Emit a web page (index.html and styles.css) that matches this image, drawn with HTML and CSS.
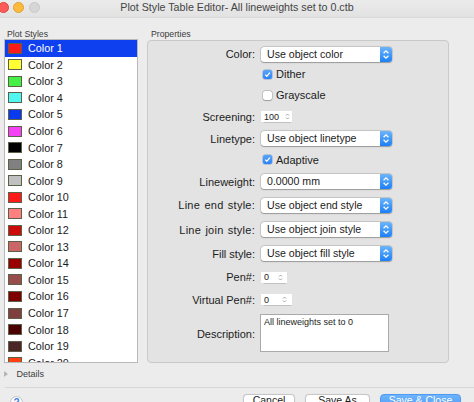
FILE: index.html
```html
<!DOCTYPE html>
<html>
<head>
<meta charset="utf-8">
<title>Plot Style Table Editor</title>
<link rel="stylesheet" href="styles.css">
</head>
<body>
<div class="titlebar">
  <div class="lights"><span class="light red"></span><span class="light yellow"></span><span class="light grey"></span></div>
  <div class="title">Plot Style Table Editor- All lineweights set to 0.ctb</div>
  <div></div>
</div>
<div class="main">
  <div class="left">
    <div class="caption cap-left">Plot Styles</div>
    <div class="list">
      <div class="row selected"><span class="sw" style="background:#ff1a1a"></span><span>Color 1</span></div>
      <div class="row"><span class="sw" style="background:#ffff33"></span><span>Color 2</span></div>
      <div class="row"><span class="sw" style="background:#44f044"></span><span>Color 3</span></div>
      <div class="row"><span class="sw" style="background:#4ff7f0"></span><span>Color 4</span></div>
      <div class="row"><span class="sw" style="background:#0a3af0"></span><span>Color 5</span></div>
      <div class="row"><span class="sw" style="background:#f540f5"></span><span>Color 6</span></div>
      <div class="row"><span class="sw" style="background:#000000"></span><span>Color 7</span></div>
      <div class="row"><span class="sw" style="background:#808080"></span><span>Color 8</span></div>
      <div class="row"><span class="sw" style="background:#c0c0c0"></span><span>Color 9</span></div>
      <div class="row"><span class="sw" style="background:#ff1a1a"></span><span>Color 10</span></div>
      <div class="row"><span class="sw" style="background:#ff8080"></span><span>Color 11</span></div>
      <div class="row"><span class="sw" style="background:#cc0a0a"></span><span>Color 12</span></div>
      <div class="row"><span class="sw" style="background:#cc6666"></span><span>Color 13</span></div>
      <div class="row"><span class="sw" style="background:#990000"></span><span>Color 14</span></div>
      <div class="row"><span class="sw" style="background:#994c4c"></span><span>Color 15</span></div>
      <div class="row"><span class="sw" style="background:#7f0000"></span><span>Color 16</span></div>
      <div class="row"><span class="sw" style="background:#7f3f3f"></span><span>Color 17</span></div>
      <div class="row"><span class="sw" style="background:#4c0000"></span><span>Color 18</span></div>
      <div class="row"><span class="sw" style="background:#4c2626"></span><span>Color 19</span></div>
      <div class="row"><span class="sw" style="background:#ff4010"></span><span>Color 20</span></div>
    </div>
  </div>
  <div class="right">
    <div class="caption cap-right">Properties</div>
    <div class="group">
      <div class="lbl">Color:</div>
      <div class="ctl"><div class="select"><span class="sel-text">Use object color</span><span class="sel-btn"><svg width="12" height="15" viewBox="0 0 12 15"><path d="M3.6 6.2 L6 3.8 L8.4 6.2 M3.6 8.8 L6 11.2 L8.4 8.8" fill="none" stroke="#fff" stroke-width="1.3"/></svg></span></div></div>

      <div class="lbl"></div>
      <div class="ctl"><span class="check on"><svg width="9" height="9" viewBox="0 0 9 9"><path d="M2.2 4.6 L3.8 6.3 L6.9 2.6" fill="none" stroke="#fff" stroke-width="1.3"/></svg></span><span class="ck-text">Dither</span></div>

      <div class="lbl"></div>
      <div class="ctl"><span class="check"></span><span class="ck-text">Grayscale</span></div>

      <div class="lbl">Screening:</div>
      <div class="ctl"><div class="spin spin-scr"><span>100</span><svg class="step" width="5" height="9" viewBox="0 0 5 9"><path d="M1 3.5 L2.5 2 L4 3.5 M1 5.5 L2.5 7 L4 5.5" fill="none" stroke="#9a9a9a" stroke-width="0.9"/></svg></div></div>

      <div class="lbl">Linetype:</div>
      <div class="ctl"><div class="select"><span class="sel-text">Use object linetype</span><span class="sel-btn"><svg width="12" height="15" viewBox="0 0 12 15"><path d="M3.6 6.2 L6 3.8 L8.4 6.2 M3.6 8.8 L6 11.2 L8.4 8.8" fill="none" stroke="#fff" stroke-width="1.3"/></svg></span></div></div>

      <div class="lbl"></div>
      <div class="ctl"><span class="check on"><svg width="9" height="9" viewBox="0 0 9 9"><path d="M2.2 4.6 L3.8 6.3 L6.9 2.6" fill="none" stroke="#fff" stroke-width="1.3"/></svg></span><span class="ck-text">Adaptive</span></div>

      <div class="lbl">Lineweight:</div>
      <div class="ctl"><div class="select"><span class="sel-text">0.0000 mm</span><span class="sel-btn"><svg width="12" height="15" viewBox="0 0 12 15"><path d="M3.6 6.2 L6 3.8 L8.4 6.2 M3.6 8.8 L6 11.2 L8.4 8.8" fill="none" stroke="#fff" stroke-width="1.3"/></svg></span></div></div>

      <div class="lbl lbl-wide">Line end style:</div>
      <div class="ctl"><div class="select"><span class="sel-text">Use object end style</span><span class="sel-btn"><svg width="12" height="15" viewBox="0 0 12 15"><path d="M3.6 6.2 L6 3.8 L8.4 6.2 M3.6 8.8 L6 11.2 L8.4 8.8" fill="none" stroke="#fff" stroke-width="1.3"/></svg></span></div></div>

      <div class="lbl lbl-wide">Line join style:</div>
      <div class="ctl"><div class="select"><span class="sel-text">Use object join style</span><span class="sel-btn"><svg width="12" height="15" viewBox="0 0 12 15"><path d="M3.6 6.2 L6 3.8 L8.4 6.2 M3.6 8.8 L6 11.2 L8.4 8.8" fill="none" stroke="#fff" stroke-width="1.3"/></svg></span></div></div>

      <div class="lbl">Fill style:</div>
      <div class="ctl"><div class="select"><span class="sel-text">Use object fill style</span><span class="sel-btn"><svg width="12" height="15" viewBox="0 0 12 15"><path d="M3.6 6.2 L6 3.8 L8.4 6.2 M3.6 8.8 L6 11.2 L8.4 8.8" fill="none" stroke="#fff" stroke-width="1.3"/></svg></span></div></div>

      <div class="lbl">Pen#:</div>
      <div class="ctl"><div class="spin spin-pen"><span>0</span><svg class="step" width="5" height="9" viewBox="0 0 5 9"><path d="M1 3.5 L2.5 2 L4 3.5 M1 5.5 L2.5 7 L4 5.5" fill="none" stroke="#9a9a9a" stroke-width="0.9"/></svg></div></div>

      <div class="lbl">Virtual Pen#:</div>
      <div class="ctl"><div class="spin spin-vpen"><span>0</span><svg class="step" width="5" height="9" viewBox="0 0 5 9"><path d="M1 3.5 L2.5 2 L4 3.5 M1 5.5 L2.5 7 L4 5.5" fill="none" stroke="#9a9a9a" stroke-width="0.9"/></svg></div></div>

      <div class="lbl lbl-desc">Description:</div>
      <div class="ctl ctl-desc"><div class="desc">All lineweights set to 0</div></div>
    </div>
  </div>
</div>
<div class="details"><svg class="tri" width="4" height="6" viewBox="0 0 4 6"><path d="M0 0 L4 3 L0 6 Z" fill="#b5b5b5"/></svg><span>Details</span></div>
<div class="sep"></div>
<div class="buttons">
  <span class="help">?</span>
  <span class="spacer"></span>
  <span class="btn b-cancel">Cancel</span>
  <span class="btn b-saveas">Save As</span>
  <span class="btn primary b-close">Save &amp; Close</span>
</div>
</body>
</html>
```

FILE: styles.css
```css
* { box-sizing: border-box; margin: 0; padding: 0; }
html, body { width: 474px; height: 402px; overflow: hidden; }
body {
  background: #ececec;
  font-family: "Liberation Sans", Arial, sans-serif;
  color: #1e1e1e;
}

.titlebar {
  height: 18px;
  display: grid;
  grid-template-columns: 1fr auto 1fr;
  align-items: start;
  background: linear-gradient(#ebebeb, #e2e2e2);
  border-bottom: 1px solid #dadada;
}
.lights { display: flex; gap: 4.5px; margin-left: -2.5px; margin-top: 2px; }
.light { width: 11px; height: 11px; border-radius: 50%; display: block; }
.red { background: #fc5b57; border: 0.5px solid #e2443e; }
.yellow { background: #fdbb3e; border: 0.5px solid #e09f2f; }
.grey { background: #d6d6d6; border: 0.5px solid #c8c8c8; }
.title {
  font-size: 10.7px;
  line-height: 12px;
  margin-top: 1px;
  color: #444;
  white-space: nowrap;
}

.main { display: flex; gap: 9px; padding: 11px 0 0 4px; }
.left { width: 134px; }
.right { width: 302px; }
.caption { font-size: 8.7px; color: #3a3a3a; white-space: nowrap; }
.cap-left { height: 10px; line-height: 10px; padding-left: 3px; }
.cap-right { height: 11px; line-height: 10px; padding-left: 4px; }

.list {
  height: 323.5px;
  background: #fff;
  border: 1px solid #b9b9b9;
  overflow: hidden;
}
.row {
  height: 16.55px;
  display: flex;
  align-items: center;
  gap: 6px;
  padding-left: 3px;
  font-size: 10.8px;
  color: #1a1a1a;
  white-space: nowrap;
}
.row.selected { background: #0e40ef; color: #fff; }
.sw {
  width: 14px;
  height: 11px;
  border: 1px solid #5b6049;
  display: block;
  flex: none;
}

.group {
  height: 322.5px;
  background: #e3e3e3;
  border: 1px solid #c9c9c9;
  border-radius: 4px;
  display: grid;
  grid-template-columns: 107px 1fr;
  grid-template-rows: 20.5px 20.25px 21px 22.5px 21.5px 20.75px 23px 24.25px 24px 24px 23px 22px 44px;
  column-gap: 6px;
  padding-top: 2.75px;
  align-items: center;
}
.lbl { text-align: right; font-size: 11px; color: #1c1c1c; white-space: nowrap; }
.lbl-wide { letter-spacing: 0.25px; word-spacing: 1px; }
.ctl { display: flex; align-items: center; }

.select {
  width: 131px;
  height: 15px;
  display: flex;
  background: #fff;
  border-radius: 3px;
  box-shadow: 0 0 0 0.5px rgba(0,0,0,0.2), 0 0.7px 1.2px rgba(0,0,0,0.25);
}
.sel-text { flex: 1; padding-left: 6px; font-size: 10.6px; line-height: 15px; color: #1c1c1c; white-space: nowrap; }
.sel-btn {
  width: 12px;
  background: linear-gradient(#6db4fb, #1b80f7);
  border-radius: 0 3px 3px 0;
  display: flex;
  align-items: center;
  justify-content: center;
}
.sel-btn svg { display: block; }

.check {
  width: 9px;
  height: 9px;
  margin-left: 1.5px;
  border-radius: 2px;
  background: #fff;
  box-shadow: 0 0 0 0.5px rgba(0,0,0,0.25), 0 0.5px 1px rgba(0,0,0,0.2);
  display: block;
  flex: none;
}
.check svg { display: block; }
.check.on { background: linear-gradient(#5aa5fa, #2a83f4); box-shadow: 0 0 0 0.5px rgba(0,60,160,0.4); }
.ck-text { margin-left: 4.5px; font-size: 11px; color: #1c1c1c; }

.spin {
  height: 11px;
  background: #fff;
  display: flex;
  align-items: center;
  padding-left: 3px;
  font-size: 9px;
  color: #1c1c1c;
  box-shadow: 0 0.5px 0.8px rgba(0,0,0,0.15);
}
.step { display: block; margin-left: auto; }
.spin-scr { width: 31px; padding-right: 2px; }
.spin-pen { width: 25.5px; padding-right: 3.5px; }
.spin-vpen { width: 30.5px; padding-right: 4.5px; }

.lbl-desc { padding-top: 3px; }
.ctl-desc { align-self: start; padding-top: 3px; }
.desc {
  width: 129px;
  height: 38px;
  background: #fff;
  border: 1px solid #a9a9a9;
  padding: 2px 3px;
  font-size: 9px;
  line-height: 11px;
  color: #1c1c1c;
  margin-left: -1px;
}

.details {
  display: flex;
  align-items: center;
  height: 12px;
  margin-top: 5px;
  padding-left: 4px;
  gap: 8.5px;
  font-size: 9px;
  color: #3c3c3c;
}
.tri { display: block; }

.sep { height: 1px; background: #d6d6d6; margin: 7px 0 0 5px; }

.buttons { display: flex; align-items: flex-start; gap: 10px; margin-top: 6.5px; padding: 0 13px 0 10px; }
.help {
  width: 13px;
  height: 13px;
  margin-top: 2px;
  border-radius: 50%;
  background: #fff;
  border: 1px solid #c2c2c2;
  color: #3a7be0;
  font-size: 10px;
  font-weight: bold;
  line-height: 11px;
  text-align: center;
}
.spacer { flex: 1; }
.btn {
  height: 20px;
  border-radius: 4px;
  background: #fff;
  border: 1px solid #c6c6c6;
  box-shadow: 0 0.5px 1px rgba(0,0,0,0.15);
  font-size: 10.5px;
  line-height: 11px;
  text-align: center;
  color: #1c1c1c;
  white-space: nowrap;
}
.b-cancel { width: 52px; }
.b-saveas { width: 65px; }
.b-close { width: 81px; }
.btn.primary { background: linear-gradient(#6fb3fb, #3d94f8); border-color: #4e9bf5; color: #fff; }
```
